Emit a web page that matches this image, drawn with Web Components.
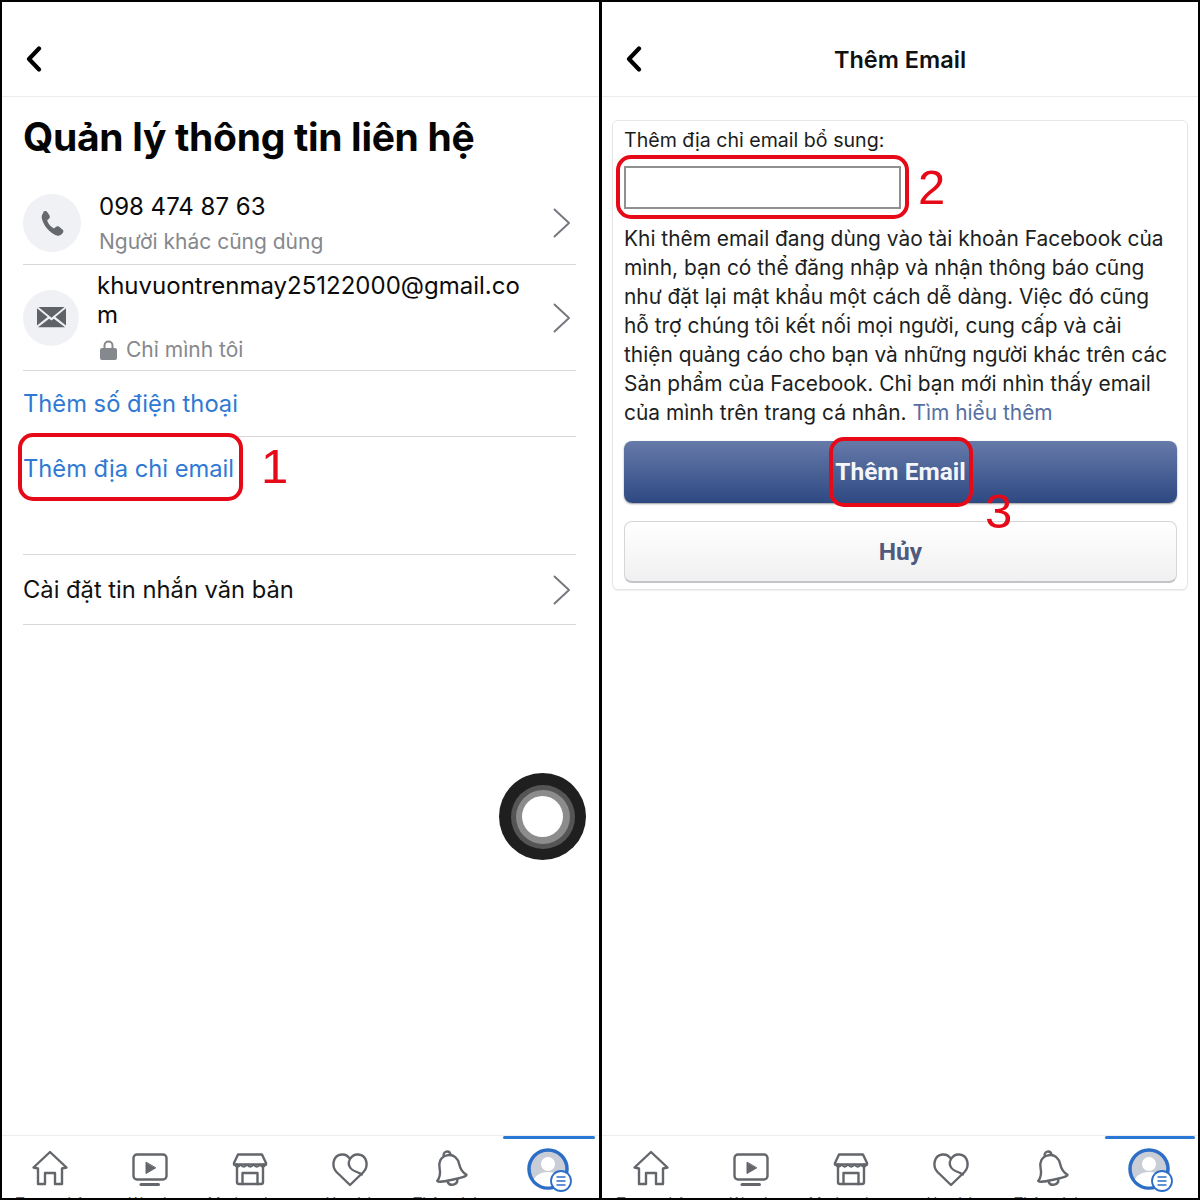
<!DOCTYPE html>
<html lang="vi"><head><meta charset="utf-8"><title>Email</title>
<style>
html,body{margin:0;padding:0;background:#000}
body{width:1200px;height:1200px;overflow:hidden;font-family:Inter,"Noto Sans",sans-serif;color:#050505}
#stage{position:relative;width:1200px;height:1200px;box-sizing:border-box;padding:2px;display:grid;grid-template-columns:597px 596px;column-gap:3px}
</style></head><body>
<div id="stage">
<phone-screen>
  <app-header></app-header>
  <page-title>Quản lý thông tin liên hệ</page-title>
  <contact-row icon="phone" h="66" pb="8" ic="58">
    <span slot="main">098 474 87 63</span><span slot="sub">Người khác cũng dùng</span>
  </contact-row>
  <contact-row icon="mail" h="105" ic="56" lock>
    <span slot="main">khuvuontrenmay25122000@gmail.com</span><span slot="sub">Chỉ mình tôi</span>
  </contact-row>
  <link-row h="65">Thêm số điện thoại</link-row>
  <link-row h="117" top="true">Thêm địa chỉ email</link-row>
  <link-row h="69" plain chevron>Cài đặt tin nhắn văn bản</link-row>
  <bottom-nav></bottom-nav>
</phone-screen>
<phone-screen>
  <app-header title="Thêm Email"></app-header>
  <email-card></email-card>
  <bottom-nav style="--nav-pad:29px;--bar-r:3px;--bar-w:90px"></bottom-nav>
</phone-screen>
<red-box style="--x:18px;--y:433px;--w:225px;--h:68px"></red-box>
<red-box style="--x:616px;--y:155px;--w:293px;--h:64px"></red-box>
<red-box style="--x:829px;--y:437px;--w:144px;--h:70px"></red-box>
<red-num style="--x:261px;--y:440px">1</red-num>
<red-num style="--x:918px;--y:161px">2</red-num>
<red-num style="--x:985px;--y:485px">3</red-num>
<home-button></home-button>
</div>
<script>
function def(name, css, html){
  customElements.define(name, class extends HTMLElement{
    connectedCallback(){
      if(this.shadowRoot) return;
      const r=this.attachShadow({mode:'open'});
      const h=typeof html==='function'?html(this):html;
      r.innerHTML='<style>'+css+'</style>'+h;
    }
  });
}
const chev='<svg width="20" height="30" viewBox="0 0 20 30" fill="none" stroke="#73767c" stroke-width="1.9" stroke-linecap="round" stroke-linejoin="round"><path d="M2.5 1.5 L17 15 L2.5 28.5"/></svg>';
const icons={
 phone:'<svg width="27" height="28" viewBox="0 0 30 32"><path fill="#65686d" d="M4.5 3.2C5.8 1.9 8 1.7 9 3.3l2.6 4.2c.7 1.2.4 2.6-.6 3.5l-1.7 1.5c-.3.3-.4.7-.2 1.1 1.500 3.600 3.700 6.300 7.100 8.300.4.2.8.2 1.100-.1l1.800-1.500c1-.8 2.400-.9 3.400-.1l3.900 3.100c1.400 1.100 1.300 3.100.1 4.300l-1.200 1.200c-1.700 1.700-4.200 2.100-6.500 1.300C11.700 27 5.300 19.800 3 11.500c-.7-2.600-.3-5.400 1.500-7.300z"/></svg>',
 mail:'<svg width="29" height="21" viewBox="0 0 30 24" preserveAspectRatio="none"><path fill="#5f6267" d="M0 1.500 11 11.500 0 21zM30 1.500V21L19 11.500zM1.500 0h27L15 12.200zM1 23l11.600-9.700L15 15.500l2.400-2.200L29 23z"/></svg>'
};
def('phone-screen',':host{display:flex;flex-direction:column;background:#fff;position:relative;overflow:hidden;height:1196px}','<slot></slot>');
def('app-header',':host{display:block;height:94px;border-bottom:1px solid #ececec;position:relative;flex:none}.in{height:100%;display:flex;align-items:center;justify-content:center;padding-top:20px;box-sizing:border-box;font:600 23.5px Inter,sans-serif;color:#111}svg{position:absolute;left:24px;top:44px}',
 e=>'<svg width="16" height="26" viewBox="0 0 16 26" fill="none" stroke="#000" stroke-width="4.200" stroke-linecap="round" stroke-linejoin="round"><path d="M13 2.500 3 13 13 23.500"/></svg><div class="in">'+(e.getAttribute('title')||'')+'</div>');
def('page-title',':host{display:block;flex:none;height:93px;box-sizing:border-box;padding:17px 0 0 21px;font:700 39px/46px Inter,sans-serif;letter-spacing:-.3px;color:#050505;white-space:nowrap}','<slot></slot>');
def('contact-row',`:host{display:flex;flex:none;align-items:center;margin:0 23px 0 21px;border-bottom:1px solid #d8d8d8;position:relative;box-sizing:content-box}
.c{flex:none;border-radius:50%;background:#f0f1f4;display:flex;align-items:center;justify-content:center}
.t{flex:none;width:432px}
.m{font:400 24px/29px Inter,sans-serif;color:#0b0b0b;word-break:break-all;margin-bottom:8px}
.s{font:400 21px/26px Inter,sans-serif;color:#85888d;display:flex;align-items:center;gap:9px}
svg.l{margin-left:3px}
.ch{margin-left:auto;margin-right:4px;display:flex}`,
 e=>{const ic=+e.getAttribute('ic');const lock=e.hasAttribute('lock');
 e.style.height=e.getAttribute('h')+'px';
 if(e.getAttribute('pb'))e.style.paddingBottom=e.getAttribute('pb')+'px';
 return `<div class="c" style="width:${ic}px;height:${ic}px">${icons[e.getAttribute('icon')]}</div>
 <div class="t" style="margin-left:18px;${lock?'margin-top:-2px':''}"><div class="m"><slot name="main"></slot></div><div class="s">${lock?'<svg class="l" width="17" height="20" viewBox="0 0 17 20"><path fill="#85888d" d="M2 8h1.500V5.500a5 5 0 0 1 10 0V8H15a2 2 0 0 1 2 2v8a2 2 0 0 1-2 2H2a2 2 0 0 1-2-2v-8a2 2 0 0 1 2-2zm3.500 0h6V5.500a3 3 0 0 0-6 0z"/></svg>':''}<slot name="sub"></slot></div></div><div class="ch">${chev}</div>`});
def('link-row',`:host{display:flex;flex:none;align-items:center;margin:0 23px 0 21px;border-bottom:1px solid #d8d8d8;font:400 23.72px/30px Inter,sans-serif;color:#2f79d4}
.ch{margin-left:auto;margin-right:4px;display:flex}`,
 e=>{e.style.height=e.getAttribute('h')+'px';
 if(e.hasAttribute('top')){e.style.alignItems='flex-start';e.style.paddingTop='17px';e.style.height=(+e.getAttribute('h')-17)+'px';}
 if(e.hasAttribute('plain'))e.style.color='#111';
 return '<slot></slot>'+(e.hasAttribute('chevron')?'<div class="ch">'+chev+'</div>':'')});
def('email-card',`:host{display:block;flex:none;margin:23px 10px 0 10px;height:470px;box-sizing:border-box;border:1px solid #e6e6e6;border-radius:6px;padding:7px 10px 0 11px;box-shadow:0 1px 1px #eee}
.lab{font:400 19.600px/24px Inter,sans-serif;color:#1c1c1c}
.inp{display:block;width:277px;height:43px;box-sizing:border-box;border:2px solid #909090;background:#fff;margin-top:14px;outline:none;padding:0}
p{margin:15px 0 0;font:400 20.900px/29px Inter,sans-serif;color:#1c1e21;width:552px}
a{color:#56709f;text-decoration:none}
.b{display:flex;align-items:center;justify-content:center;height:62px;width:553px;box-sizing:border-box;border-radius:8px;font:700 24.500px Roboto,Inter,sans-serif}
.p{margin-top:14px;background:linear-gradient(#667aa9,#2e4982);color:#f5f6f8;box-shadow:0 1px 2px #999;padding-bottom:2px}
.g{margin-top:18px;background:linear-gradient(#fff,#f0f0f1);border:1px solid #d5d6d8;border-bottom:2px solid #c2c3c6;color:#4f5a7c}`,
 `<div class="lab">Thêm địa chỉ email bổ sung:</div><input class="inp" aria-label="email">
 <p>Khi thêm email đang dùng vào tài khoản Facebook của mình, bạn có thể đăng nhập và nhận thông báo cũng như đặt lại mật khẩu một cách dễ dàng. Việc đó cũng hỗ trợ chúng tôi kết nối mọi người, cung cấp và cải thiện quảng cáo cho bạn và những người khác trên các Sản phẩm của Facebook. Chỉ bạn mới nhìn thấy email của mình trên trang cá nhân. <a>Tìm hiểu thêm</a></p>
 <div class="b p">Thêm Email</div><div class="b g">Hủy</div>`);
const S='fill="none" stroke="#63666b" stroke-width="2.400" stroke-linecap="round" stroke-linejoin="round"';
const navIcons=[
 `<svg width="40" height="40" viewBox="0 0 40 40" ${S}><path d="M20 3 3.500 18.500 8 19.500V35h7V24h10v11h7V19.500l4.500-1z"/></svg>`,
 `<svg width="40" height="40" viewBox="0 0 40 40" ${S}><rect x="3.500" y="5.500" width="33" height="25" rx="3.500"/><path d="M16 13.500v11l9.500-5.500z" fill="#63666b" stroke-width="1"/><path d="M11 35.500h17.500" stroke-width="3"/></svg>`,
 `<svg width="40" height="40" viewBox="0 0 40 40" ${S}><path d="M7 15.500V33a2 2 0 0 0 2 2h22a2 2 0 0 0 2-2V15.500"/><path d="M8 5.500h24l4 8.500v1.500H4V14z"/><path d="M4 15.500c2.500 3 5 3 6.500 0 2 3 4.500 3 6.500 0 2 3 4.500 3 6.500 0 2 3 4.500 3 6.500 0 1.500 3 4 3 6 0" stroke-width="1.800"/><path d="M12.500 35V24h15v11" /></svg>`,
 `<svg width="40" height="40" viewBox="0 0 40 40" ${S}><path d="M20 36 6.500 23C1 17 3 6.500 11.500 5.500c3.500-.4 6.500 1.200 8.500 4.500 2-3.300 5-4.900 8.500-4.500C37 6.500 39 17 33.500 23z"/><path d="M20 10c-2 3.500-1.500 7.500 2 10.500 3 2.300 7 3 10 5" stroke-width="2.200"/></svg>`,
 `<svg width="40" height="40" viewBox="0 0 40 40" ${S}><g transform="rotate(-12 20 20)"><path d="M20 6c-7 0-10 5.500-10 11 0 6-1.500 9-5 12 1 1.500 3 2 15 2s14-.5 15-2c-3.500-3-5-6-5-12 0-5.500-3-11-10-11z"/><path d="M16.500 6c0-5 7-5 7 0"/><path d="M15 31.500c.5 6 9.500 6 10 0"/></g></svg>`,
 `<svg width="48" height="48" viewBox="0 0 48 48"><defs><clipPath id="cp"><circle cx="22" cy="22" r="17.500"/></clipPath></defs><circle cx="22" cy="22" r="19" fill="#c9cdd5" stroke="#2c6dc6" stroke-width="3.500"/><g clip-path="url(#cp)" fill="#fff"><circle cx="22" cy="17" r="7"/><ellipse cx="22" cy="36" rx="15" ry="11"/></g><circle cx="35" cy="34" r="10" fill="#fff" stroke="#2c6dc6" stroke-width="1.800"/><path d="M30.500 30h9M30.500 34h9M30.500 38h9" stroke="#2c6dc6" stroke-width="1.400"/></svg>`
];
def('bottom-nav',`:host{display:block;flex:none;margin-top:auto;height:62px;border-top:1px solid #eeeeee;position:relative}
.r{display:flex;gap:60px;padding:13px 0 0 var(--nav-pad,28px)}
.i{width:40px;height:40px;flex:none;display:flex;flex-direction:column;align-items:center}
.i svg{flex:none}
.l{width:100px;flex:none;text-align:center;font:400 14.500px/17px Inter,sans-serif;color:#63666b;margin-top:5px;white-space:nowrap}
.i:last-child .l{color:#2c6dc6}
.i:last-child{margin-left:-2px}
.i:last-child svg{margin:-2px 0 -5px 4px}
.bar{position:absolute;right:var(--bar-r,4px);top:0;width:var(--bar-w,92px);height:3px;background:#2a78d6;border-radius:2px}`,
 ()=>{const L=['Trang chủ','Watch','Marketplace','Hẹn hò','Thông báo','Menu'];
 return '<div class="bar"></div><div class="r">'+L.map((t,i)=>'<div class="i">'+navIcons[i]+'<div class="l">'+t+'</div></div>').join('')+'</div>'});
def('red-box',':host{position:absolute;left:var(--x);top:var(--y);width:var(--w);height:var(--h);box-sizing:border-box;border:4px solid #e60a18;border-radius:15px}','');
def('red-num',':host{position:absolute;left:var(--x);top:var(--y);font:400 49px/52px "Liberation Sans",sans-serif;color:#e60a18}','<slot></slot>');
def('home-button',`:host{position:absolute;left:499px;top:773px;width:87px;height:87px;border-radius:50%;background:#1f1f1f;display:flex;align-items:center;justify-content:center}
.a{width:64px;height:64px;border-radius:50%;background:#555;display:flex;align-items:center;justify-content:center}
.b{width:54px;height:54px;border-radius:50%;background:#8c8c8c;display:flex;align-items:center;justify-content:center}
.c{width:41px;height:41px;border-radius:50%;background:#fff}`,'<div class="a"><div class="b"><div class="c"></div></div></div>');
</script>
</body></html>
